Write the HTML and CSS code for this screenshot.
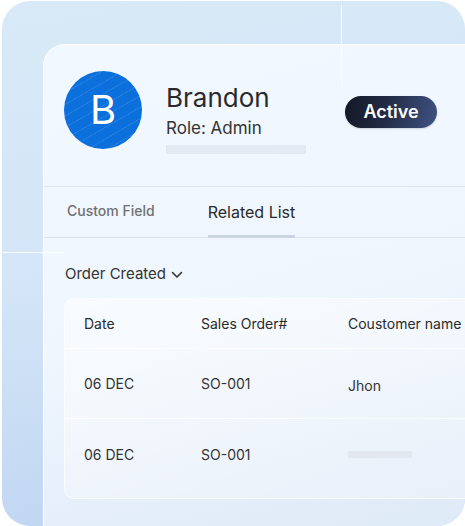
FILE: index.html
```html
<!DOCTYPE html>
<html>
<head>
<meta charset="utf-8">
<link rel="stylesheet" href="styles.css">
</head>
<body>
<div class="frame">
  <span class="deco-v"></span>
  <span class="deco-h"></span>
  <div class="card">
    <div class="header">
      <div class="avatar">B</div>
      <div class="info">
        <div class="name">Brandon</div>
        <div class="role">Role: Admin</div>
        <div class="placeholder"></div>
      </div>
      <div class="pill">Active</div>
    </div>
    <div class="tabs">
      <div class="tab">Custom Field</div>
      <div class="tab tab-active">Related List</div>
    </div>
    <div class="filter">
      <span>Order Created</span>
      <svg class="chev" width="12" height="8" viewBox="0 0 12 8"><path d="M1.5 1.5 L6 6 L10.5 1.5" fill="none" stroke="#333" stroke-width="1.6" stroke-linecap="round" stroke-linejoin="round"/></svg>
    </div>
    <div class="table">
      <div class="row row-head">
        <div>Date</div>
        <div>Sales Order#</div>
        <div>Coustomer name</div>
      </div>
      <div class="row">
        <div>06 DEC</div>
        <div>SO-001</div>
        <div class="lower">Jhon</div>
      </div>
      <div class="row row-last">
        <div>06 DEC</div>
        <div>SO-001</div>
        <div><span class="bar"></span></div>
      </div>
    </div>
  </div>
</div>
</body>
</html>
```

FILE: styles.css
```css
html, body {
  margin: 0;
  padding: 0;
  background: #ffffff;
  overflow: hidden;
}
body {
  width: 465px;
  height: 526px;
  font-family: Inter, "Noto Sans", sans-serif;
  color: #2b2b2b;
}
.frame {
  position: relative;
  margin: 1px 0 0 2px;
  width: 463px;
  height: 525px;
  border-radius: 28px;
  overflow: hidden;
  background: linear-gradient(170deg, #d8e9f7 0%, #d4e6f7 45%, #bcd2f1 100%);
}
.deco-v {
  position: absolute;
  left: 339px;
  top: 4px;
  width: 1px;
  height: 80px;
  background: #ffffff;
  z-index: 2;
}
.deco-h {
  position: absolute;
  left: 0;
  top: 251px;
  width: 62px;
  height: 1px;
  background: rgba(255,255,255,0.85);
  z-index: 2;
}
.card {
  margin: 43px 0 0 41px;
  width: 460px;
  height: 520px;
  border-radius: 22px 0 0 0;
  border-top: 1.5px solid #ffffff;
  border-left: 1.5px solid #ffffff;
  background: linear-gradient(165deg, #f1f8ff 0%, #eff6fe 50%, #e3edf9 80%, #dde8f7 100%);
  box-sizing: border-box;
}
.header {
  display: flex;
  align-items: flex-start;
  padding: 26px 0 0 20px;
  height: 142px;
  box-sizing: border-box;
  border-bottom: 1px solid #dde6ef;
}
.avatar {
  flex: none;
  width: 78px;
  height: 78px;
  border-radius: 50%;
  background:
    repeating-linear-gradient(150deg, rgba(255,255,255,0) 0px, rgba(255,255,255,0) 9px, rgba(255,255,255,0.1) 9px, rgba(255,255,255,0.1) 10px),
    #0b6fdc;
  color: #ffffff;
  font-size: 40px;
  line-height: 78px;
  text-align: center;
  font-weight: 400;
}
.info {
  flex: none;
  width: 155px;
  margin-left: 24px;
  padding-top: 12px;
}
.name {
  font-size: 26px;
  line-height: 30px;
  color: #2a2a2a;
  font-weight: 400;
}
.role {
  margin-top: 4px;
  font-size: 17px;
  line-height: 22px;
  color: #333333;
}
.placeholder {
  margin-top: 6px;
  width: 140px;
  height: 9px;
  background: #e4eaf3;
}
.pill {
  flex: none;
  margin: 25px 0 0 24px;
  width: 92px;
  height: 32px;
  border-radius: 16px;
  background: linear-gradient(100deg, #131826 0%, #232c45 45%, #3f5282 100%);
  color: #ffffff;
  font-size: 18px;
  font-weight: 600;
  line-height: 32px;
  text-align: center;
  box-shadow: 0 1px 2px rgba(0,0,0,0.15);
}
.tabs {
  display: flex;
  align-items: flex-end;
  gap: 53px;
  padding-left: 23px;
  height: 51px;
  box-sizing: border-box;
  border-bottom: 1px solid #dbe4ee;
}
.tab {
  height: 50px;
  display: flex;
  align-items: center;
  box-sizing: border-box;
  font-size: 14px;
  font-weight: 500;
  color: #707070;
  padding-bottom: 3px;
}
.tab-active {
  font-size: 16px;
  font-weight: 400;
  color: #2a2a2a;
  padding-bottom: 0;
  border-bottom: 3px solid #ccd6e2;
  border-radius: 0 0 1px 1px;
  margin-bottom: -1px;
}
.filter {
  display: flex;
  align-items: center;
  gap: 5px;
  padding: 26px 0 0 21px;
  font-size: 15px;
  line-height: 20px;
  color: #333333;
}
.chev {
  margin-top: 1px;
}
.table {
  margin: 14px 0 0 20px;
  width: 440px;
  border-radius: 10px;
  border: 1px solid rgba(255,255,255,0.7);
  background: linear-gradient(160deg, rgba(255,255,255,0.55) 0%, rgba(255,255,255,0.35) 60%, rgba(255,255,255,0.25) 100%);
  padding-bottom: 9px;
  box-sizing: border-box;
}
.row {
  display: grid;
  grid-template-columns: 117px 147px 1fr;
  align-items: center;
  padding-left: 19px;
  height: 70px;
  box-sizing: border-box;
  font-size: 14px;
  color: #333333;
  border-bottom: 1px solid rgba(255,255,255,0.85);
}
.row-head {
  height: 50px;
  color: #2a2a2a;
}
.row-last {
  border-bottom: none;
}
.lower {
  padding-top: 3px;
}
.bar {
  display: block;
  width: 64px;
  height: 7px;
  background: #e3e8f0;
}
```
